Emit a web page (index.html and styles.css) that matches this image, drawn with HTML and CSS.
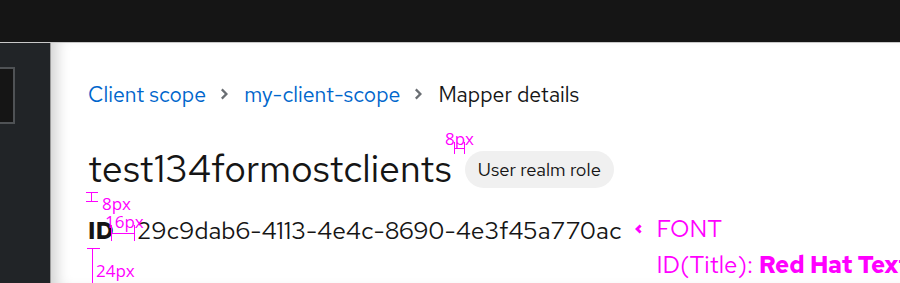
FILE: index.html
```html
<!DOCTYPE html>
<html>
<head>
<meta charset="utf-8">
<link rel="stylesheet" href="styles.css">
</head>
<body>
<header class="masthead"></header>
<div class="layout">
  <aside class="sidebar">
    <div class="sidebar-box"></div>
  </aside>
  <main class="main">
    <nav class="breadcrumb">
      <a class="crumb-link">Client scope</a>
      <svg class="crumb-sep" viewBox="0 0 8 12" width="8" height="12"><path d="M1.6 0.6 L7 6 L1.6 11.4 L0 9.8 L3.8 6 L0 2.2 Z" fill="#6a6e73"/></svg>
      <a class="crumb-link">my-client-scope</a>
      <svg class="crumb-sep" viewBox="0 0 8 12" width="8" height="12"><path d="M1.6 0.6 L7 6 L1.6 11.4 L0 9.8 L3.8 6 L0 2.2 Z" fill="#6a6e73"/></svg>
      <span class="crumb-current">Mapper details</span>
    </nav>
    <div class="title-row">
      <h1 class="title">test134formostclients</h1>
      <span class="badge">User realm role</span>
      <div class="anno anno-gap8">
        <span class="anno-label">8px</span>
        <span class="hbar"></span>
      </div>
    </div>
    <div class="id-row">
      <div class="anno anno-top8">
        <span class="ibeam ibeam-8"></span>
        <span class="anno-label">8px</span>
      </div>
      <span class="id-label">ID</span>
      <span class="id-value">29c9dab6-4113-4e4c-8690-4e3f45a770ac</span>
      <div class="anno anno-gap16">
        <span class="anno-label">16px</span>
        <span class="hbar hbar-16"></span>
      </div>
      <div class="font-note">
        <svg class="note-chev" viewBox="0 0 8 10" width="8" height="10"><path d="M5.6 0.4 L1 5 L5.6 9.6 L7.6 7.6 L5 5 L7.6 2.4 Z" fill="#ff00ff"/></svg>
        <div class="note-text">
          <div class="note-line">FONT</div>
          <div class="note-line">ID(Title): <b>Red Hat Text</b></div>
        </div>
      </div>
    </div>
    <div class="anno anno-bottom24">
      <span class="ibeam ibeam-24"></span>
      <span class="anno-label">24px</span>
    </div>
  </main>
</div>
</body>
</html>
```
FILE: styles.css
```css
html, body {
  margin: 0;
  padding: 0;
  height: 283px;
  overflow: hidden;
  background: #ffffff;
  font-family: "Red Hat Text", "Open Sans", "Liberation Sans", sans-serif;
}
.masthead {
  height: 42px;
  background: #151515;
  border-bottom: 1px solid #c8c8c8;
}
.layout {
  display: flex;
  height: 240px;
}
.sidebar {
  width: 51px;
  flex: none;
  background: #212427;
  padding-top: 24px;
  box-sizing: border-box;
  border-right: 1px solid #9a9a9a;
}
.sidebar-box {
  width: 13px;
  height: 53px;
  background: #151515;
  border: 2px solid #4f5255;
  border-left: none;
}
.main {
  flex: 1;
  position: relative;
  padding: 36px 0 0 37px;
  box-shadow: inset 14px 0 14px -8px rgba(0, 0, 0, 0.18);
  white-space: nowrap;
}
.breadcrumb {
  display: flex;
  align-items: center;
  gap: 15px;
  font-size: 21.3px;
  line-height: 30px;
}
.crumb-link {
  color: #0066cc;
}
.crumb-current {
  color: #151515;
}
.crumb-sep {
  display: block;
}
.title-row {
  display: flex;
  align-items: center;
  gap: 13px;
  margin-top: 38px;
  position: relative;
}
.title {
  margin: 0;
  font-size: 37.6px;
  font-weight: 400;
  line-height: 44px;
  color: #151515;
}
.badge {
  background: #f0f0f0;
  border-radius: 19px;
  height: 37px;
  padding: 0 13px;
  display: flex;
  align-items: center;
  font-size: 18.4px;
  color: #151515;
}
.id-row {
  display: flex;
  align-items: center;
  margin-top: 22px;
  position: relative;
  height: 34px;
}
.id-label {
  font-size: 24px;
  font-weight: 700;
  color: #151515;
  margin-right: 23px;
}
.id-value {
  font-size: 24.5px;
  color: #151515;
}
.anno {
  position: absolute;
  color: #ff00ff;
  font-size: 17px;
  line-height: 17px;
  font-family: "Open Sans", sans-serif;
}
.anno-label {
  position: absolute;
}
.hbar {
  position: absolute;
  height: 12px;
  border-left: 1px solid #ff00ff;
  border-right: 1px solid #ff00ff;
  background: linear-gradient(#ff00ff, #ff00ff) center / 100% 1px no-repeat;
}
.anno-gap8 {
  left: 357px;
  top: -14px;
}
.anno-gap8 .anno-label {
  left: 0;
  top: -3px;
}
.anno-gap8 .hbar {
  left: 9px;
  top: 9px;
  width: 9px;
}
.ibeam {
  position: absolute;
  width: 12px;
  border-top: 1px solid #ff00ff;
  border-bottom: 1px solid #ff00ff;
  background: linear-gradient(#ff00ff, #ff00ff) 5px 0 / 1px 100% no-repeat;
}
.anno-top8 {
  left: 0;
  top: -21px;
}
.ibeam-8 {
  left: -2px;
  top: 0;
  height: 8px;
}
.anno-top8 .anno-label {
  left: 14px;
  top: 3px;
}
.anno-gap16 {
  left: 23px;
  top: 0;
}
.anno-gap16 .anno-label {
  left: -6px;
  top: 0;
}
.hbar-16 {
  left: 0;
  top: 12px;
  width: 22px;
  height: 16px;
}
.font-note {
  display: flex;
  align-items: flex-start;
  margin-left: 13px;
  gap: 14px;
  color: #ff00ff;
  font-size: 24px;
  line-height: 36px;
  margin-top: 33px;
}
.note-chev {
  margin-top: 13px;
}
.note-line b {
  font-weight: 700;
}
.anno-bottom24 {
  left: 36px;
  top: 205px;
}
.ibeam-24 {
  left: 0;
  top: 0;
  height: 34px;
  width: 13px;
}
.anno-bottom24 .anno-label {
  left: 9px;
  top: 14px;
}
```
